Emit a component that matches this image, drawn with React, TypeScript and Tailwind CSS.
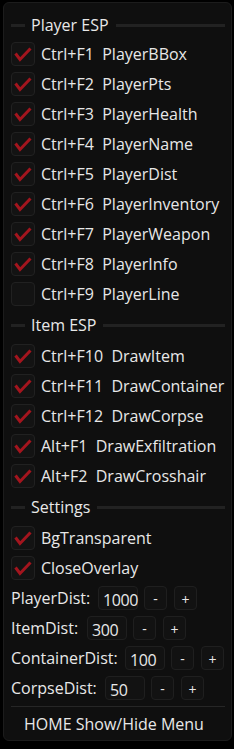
import React from 'react';

interface Toggle {
  key: string;
  label: string;
  on: boolean;
}

interface DistSetting {
  label: string;
  value: number;
  labelW: string;
}

const playerEsp: Toggle[] = [
  { key: 'Ctrl+F1', label: 'PlayerBBox', on: true },
  { key: 'Ctrl+F2', label: 'PlayerPts', on: true },
  { key: 'Ctrl+F3', label: 'PlayerHealth', on: true },
  { key: 'Ctrl+F4', label: 'PlayerName', on: true },
  { key: 'Ctrl+F5', label: 'PlayerDist', on: true },
  { key: 'Ctrl+F6', label: 'PlayerInventory', on: true },
  { key: 'Ctrl+F7', label: 'PlayerWeapon', on: true },
  { key: 'Ctrl+F8', label: 'PlayerInfo', on: true },
  { key: 'Ctrl+F9', label: 'PlayerLine', on: false },
];

const itemEsp: Toggle[] = [
  { key: 'Ctrl+F10', label: 'DrawItem', on: true },
  { key: 'Ctrl+F11', label: 'DrawContainer', on: true },
  { key: 'Ctrl+F12', label: 'DrawCorpse', on: true },
  { key: 'Alt+F1', label: 'DrawExfiltration', on: true },
  { key: 'Alt+F2', label: 'DrawCrosshair', on: true },
];

const dists: DistSetting[] = [
  { label: 'PlayerDist:', value: 1000, labelW: 'w-[87px]' },
  { label: 'ItemDist:', value: 300, labelW: 'w-[76px]' },
  { label: 'ContainerDist:', value: 100, labelW: 'w-[114px]' },
  { label: 'CorpseDist:', value: 50, labelW: 'w-[94px]' },
];

function SectionHeader({ title }: { title: string }) {
  return (
    <div className="flex items-center h-[26px]">
      <div className="w-[14px] h-[3px] bg-[#222222]" />
      <span className="px-[6px] text-[#e8e8e8] leading-none">{title}</span>
      <div className="flex-1 h-[3px] bg-[#222222] ml-[1px]" />
    </div>
  );
}

function CheckBox({ on }: { on: boolean }) {
  return (
    <div className="w-[24px] h-[24px] shrink-0 rounded-[4px] bg-[#131313] border border-[#212121] flex items-center justify-center">
      {on && (
        <svg width="24" height="24" viewBox="0 0 24 24" className="-m-px">
          <path d="M4.5 11.5 L9 17.5 L19.5 6.5" fill="none" stroke="#a3151e" strokeWidth="3" strokeLinecap="butt" strokeLinejoin="miter" />
        </svg>
      )}
    </div>
  );
}

function CheckRow({ text, on }: { text: string; on: boolean }) {
  return (
    <div className="flex items-center h-[24px] gap-[6px]">
      <CheckBox on={on} />
      <span className="whitespace-pre text-[#e8e8e8] leading-none">{text}</span>
    </div>
  );
}

function DistRow({ d }: { d: DistSetting }) {
  return (
    <div className="flex items-center h-[24px]">
      <span className={`${d.labelW} shrink-0 text-[#e8e8e8] leading-none`}>{d.label}</span>
      <div className="w-[40px] h-[24px] rounded-[4px] bg-[#121212] border border-[#1f1f1f] pl-[4px] flex items-center">
        <span className="text-[#e8e8e8] leading-none pt-[3px] tracking-[-0.4px]">{d.value}</span>
      </div>
      <div className="ml-[6px] w-[23px] h-[24px] rounded-[4px] bg-[#121212] border border-[#1f1f1f] flex items-center justify-center text-[#e8e8e8] text-[14px] leading-none pt-[2px]">
        -
      </div>
      <div className="ml-[7px] w-[23px] h-[24px] rounded-[4px] bg-[#121212] border border-[#1f1f1f] flex items-center justify-center text-[#e8e8e8] text-[14px] leading-none pt-[3px]">
        +
      </div>
    </div>
  );
}

export default function App() {
  return (
    <div
      className="w-[234px] h-[749px] bg-black overflow-hidden text-[16px]"
      style={{ fontFamily: '"Open Sans", "Noto Sans", sans-serif' }}
    >
      {/* Menu window */}
      <div className="ml-[3px] mt-[2px] w-[229px] h-[739px] rounded-[6px] bg-[#0f0f0f] border border-[#1c1c1c] pl-[7px] pr-[6px] pt-[9px] flex flex-col">
        <SectionHeader title="Player ESP" />
        <div className="flex flex-col gap-[6px] pt-[4px]">
          {playerEsp.map((t) => (
            <CheckRow key={t.key} text={`${t.key}  ${t.label}`} on={t.on} />
          ))}
        </div>

        <div className="mt-[6px]">
          <SectionHeader title="Item ESP" />
        </div>
        <div className="flex flex-col gap-[6px] pt-[6px]">
          {itemEsp.map((t) => (
            <CheckRow key={t.key} text={`${t.key}  ${t.label}`} on={t.on} />
          ))}
        </div>

        <div className="mt-[6px]">
          <SectionHeader title="Settings" />
        </div>
        <div className="flex flex-col gap-[6px] pt-[6px]">
          <CheckRow text="BgTransparent" on={true} />
          <CheckRow text="CloseOverlay" on={true} />
          {dists.map((d) => (
            <DistRow key={d.label} d={d} />
          ))}
        </div>

        <div className="mt-[6px] h-px bg-[#262626]" />
        <div className="flex-1 flex items-center pl-[13px] text-[#e8e8e8] leading-none">
          HOME Show/Hide Menu
        </div>
      </div>
    </div>
  );
}
